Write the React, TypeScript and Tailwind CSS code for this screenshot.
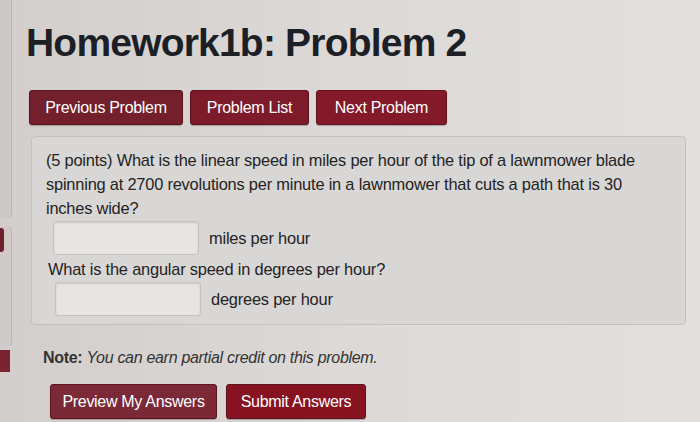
import React from 'react';

const font = { fontFamily: '"Liberation Sans", Arial, sans-serif' };

function RedButton({ children, className = '' }: { children: React.ReactNode; className?: string }) {
  return (
    <button
      className={`h-[35px] whitespace-nowrap rounded-[3px] px-[8px] text-[16px] text-white tracking-[-0.3px] border border-[#5e1320] shadow-[0_1px_1px_rgba(0,0,0,0.25)] ${className}`}
    >
      {children}
    </button>
  );
}

function AnswerBlank() {
  return <div className="w-[146px] h-[34px] bg-[#e7e5e3] border border-[#c4c1bf] rounded-[3px] shadow-[inset_0_1px_2px_rgba(0,0,0,0.12)]" />;
}

export default function App() {
  return (
    <div
      style={font}
      className="w-[700px] h-[422px] overflow-hidden flex bg-gradient-to-r from-[#d3cecc] via-[#dcd9d7] to-[#e2e0de] text-[#2b2b2b]"
    >
      {/* sidebar edge */}
      <div className="w-[12px] shrink-0 flex flex-col">
        <div className="h-[218px] bg-[#cdc8c6] border-r border-[#bcb7b5] rounded-br-[3px]" />
        <div className="h-[8px]" />
        <div className="h-[120px] bg-[#cfcac8] border-r border-[#bcb7b5] rounded-r-[4px] pt-[2px]">
          <div className="w-[4px] h-[24px] bg-[#6f1f2b] rounded-r-[3px]" />
        </div>
        <div className="h-[4px]" />
        <div className="w-[10px] h-[22px] bg-[#7a2431]" />
      </div>

      {/* main */}
      <div className="flex-1 flex flex-col">
        <h1 className="ml-[14px] mt-[23px] text-[39px] leading-[40px] font-bold tracking-[-0.8px] text-[#1c1f26]">
          Homework1b: Problem 2
        </h1>

        <div className="ml-[17px] mt-[27px] flex gap-[7px]">
          <RedButton className="bg-[#731f2c] w-[154px]">Previous Problem</RedButton>
          <RedButton className="bg-[#7d1b2a] w-[119px]">Problem List</RedButton>
          <RedButton className="bg-[#84192a] w-[131px]">Next Problem</RedButton>
        </div>

        <div className="ml-[19px] mr-[14px] mt-[11px] h-[189px] bg-[#d9d7d5] border border-[#c3c0be] rounded-[4px] pl-[14px] pr-[36px] pt-[11px] text-[16.4px] leading-[24px] tracking-[-0.2px] text-[#232323]">
          <p>
            (5 points) What is the linear speed in miles per hour of the tip of a lawnmower blade spinning at 2700
            revolutions per minute in a lawnmower that cuts a path that is 30 inches wide?
          </p>
          <div className="flex items-center gap-[10px] ml-[7px] mt-[1px]">
            <AnswerBlank />
            <span>miles per hour</span>
          </div>
          <p className="ml-[2px] mt-[2px]">What is the angular speed in degrees per hour?</p>
          <div className="flex items-center gap-[10px] ml-[9px] mt-[1px]">
            <AnswerBlank />
            <span>degrees per hour</span>
          </div>
        </div>

        <p className="ml-[31px] mt-[21px] text-[16px] tracking-[-0.3px] text-[#333]">
          <span className="font-bold">Note:</span> <i>You can earn partial credit on this problem.</i>
        </p>

        <div className="ml-[38px] mt-[14px] flex gap-[9px]">
          <RedButton className="bg-[#7c2937] w-[167px] text-[#e4dcdd]">Preview My Answers</RedButton>
          <RedButton className="bg-[#86131f] w-[140px]">Submit Answers</RedButton>
        </div>
      </div>
    </div>
  );
}
